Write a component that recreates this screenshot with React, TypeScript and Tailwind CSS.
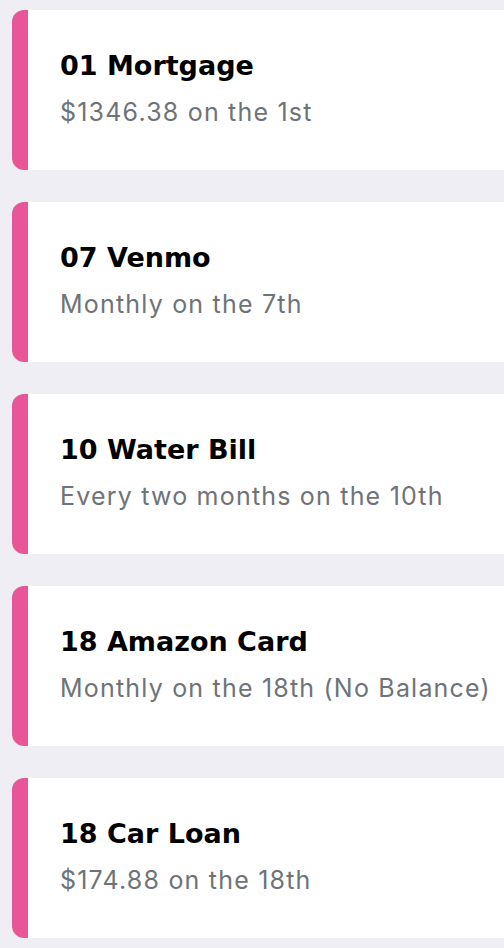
const bills = [
  { title: "01 Mortgage", detail: "$1346.38 on the 1st" },
  { title: "07 Venmo", detail: "Monthly on the 7th" },
  { title: "10 Water Bill", detail: "Every two months on the 10th" },
  { title: "18 Amazon Card", detail: "Monthly on the 18th (No Balance)" },
  { title: "18 Car Loan", detail: "$174.88 on the 18th" },
];

const App = () => {
  return (
    <div
      className="min-h-[948px] w-full overflow-hidden bg-[#efeef4] pl-[12px] pt-[10px] pb-[10px]"
      style={{ fontFamily: "Inter, 'Noto Sans', sans-serif" }}
    >
      <div className="flex flex-col gap-[32px]">
        {bills.map((bill) => (
          <div
            key={bill.title}
            className="flex h-[160px] flex-col rounded-l-[12px] border-l-[16px] border-[#ea5598] bg-white pl-[32px] pt-[40px]"
          >
            <h2 className="font-['DejaVu_Sans',sans-serif] text-[27px] leading-[32px] font-bold text-black">
              {bill.title}
            </h2>
            <span className="mt-[15px] text-[25px] leading-[30px] tracking-[1.2px] text-[#6e7378]">
              {bill.detail}
            </span>
          </div>
        ))}
      </div>
    </div>
  );
};

export default App;
